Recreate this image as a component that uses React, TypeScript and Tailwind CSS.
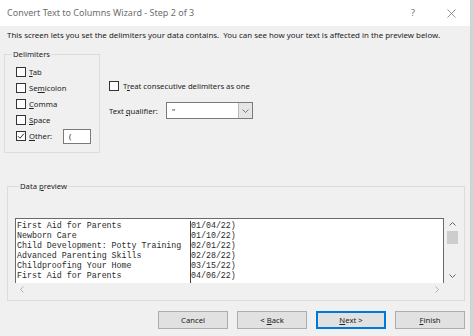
import React from 'react';

const ui = { fontFamily: '"Noto Sans", "Open Sans", sans-serif' };
const mono = { fontFamily: '"Liberation Mono", "Courier New", monospace' };

const Box = ({ checked = false }: { checked?: boolean }) => (
  <span className="w-[10px] h-[10px] border border-[#333333] bg-white flex items-center justify-center shrink-0">
    {checked && (
      <svg width="8" height="8" viewBox="0 0 8 8">
        <path d="M1 4.2 L3 6.2 L7 1.6" fill="none" stroke="#333" strokeWidth="1" />
      </svg>
    )}
  </span>
);

const Check = ({ label, u, checked }: { label: string; u: number; checked?: boolean }) => (
  <div className="h-[16px] flex items-center gap-[3px]">
    <Box checked={checked} />
    <span>
      {label.slice(0, u)}
      <span className="underline">{label[u]}</span>
      {label.slice(u + 1)}
    </span>
  </div>
);

const rows = [
  ['First Aid for Parents', '01/04/22)'],
  ['Newborn Care', '01/10/22)'],
  ['Child Development: Potty Training', '02/01/22)'],
  ['Advanced Parenting Skills', '02/28/22)'],
  ['Childproofing Your Home', '03/15/22)'],
  ['First Aid for Parents', '04/06/22)'],
];

const Btn = ({ children, primary = false }: { children: React.ReactNode; primary?: boolean }) => (
  <div
    className={`w-[70px] h-[18px] flex items-center justify-center bg-[#e1e1e1] ${
      primary ? 'border-2 border-[#0078d7]' : 'border border-[#adadad]'
    }`}
  >
    {children}
  </div>
);

export default function App() {
  return (
    <div className="w-[474px] h-[336px] bg-[#d4d4d4] flex overflow-hidden text-[#222222] text-[7.7px] leading-[10px]" style={ui}>
      <div className="w-[471px] h-[336px] bg-[#f0f0f0] border-r border-[#cfcfcf] flex flex-col">
        {/* title bar */}
        <div className="h-[26px] shrink-0 bg-white flex items-center pl-[7px] text-[9px] text-[#6e6e6e]">
          <span className="flex-1">Convert Text to Columns Wizard - Step 2 of 3</span>
          <span className="w-[10px] text-[9px] mr-[26px]">?</span>
          <svg width="9" height="9" viewBox="0 0 9 9" className="mr-[14px]">
            <path d="M0.5 0.5 L8.5 8.5 M8.5 0.5 L0.5 8.5" stroke="#7a7a7a" strokeWidth="0.8" />
          </svg>
        </div>

        <div className="px-[4px] pt-[4px] flex flex-col">
          <p className="pl-[3px] text-[7.9px]">
            This screen lets you set the delimiters your data contains.&nbsp; You can see how your text is affected in the preview below.
          </p>

          <div className="flex mt-[9px]">
            <fieldset className="w-[96px] h-[104px] border border-[#dcdcdc] pl-[11px]">
              <legend className="ml-[-4px] px-[1px] h-[10px]">Delimiters</legend>
              <div className="pt-[5px] flex flex-col">
                <Check label="Tab" u={0} />
                <Check label="Semicolon" u={2} />
                <Check label="Comma" u={0} />
                <Check label="Space" u={0} />
                <div className="h-[16px] flex items-center gap-[3px]">
                  <Box checked />
                  <span className="w-[31px]">
                    <span className="underline">O</span>ther:
                  </span>
                  <div className="w-[28px] h-[15px] bg-white border border-[#7a7a7a] flex items-center pl-[5px]">(</div>
                </div>
              </div>
            </fieldset>

            <div className="ml-[9px] pt-[31px] flex flex-col">
              <div className="h-[12px] flex items-center gap-[4px]">
                <Box />
                <span>
                  T<span className="underline">r</span>eat consecutive delimiters as one
                </span>
              </div>
              <div className="mt-[10px] h-[17px] flex items-center">
                <span className="w-[57px]">
                  Text <span className="underline">q</span>ualifier:
                </span>
                <div className="w-[87px] h-[17px] bg-white border border-[#7a7a7a] flex">
                  <span className="flex-1 pl-[5px] flex items-center">"</span>
                  <span className="w-[14px] bg-[#e5e5e5] border-l border-[#b9b9b9] flex items-center justify-center">
                    <svg width="7" height="4" viewBox="0 0 7 4">
                      <path d="M0.5 0.5 L3.5 3.5 L6.5 0.5" fill="none" stroke="#606060" strokeWidth="0.8" />
                    </svg>
                  </span>
                </div>
              </div>
            </div>
          </div>

          <fieldset className="ml-[3px] mt-[28px] w-[458px] h-[120px] border border-[#dcdcdc] pl-[7px]">
            <legend className="ml-[4px] px-[1px] h-[10px]">
              Data <span className="underline">p</span>review
            </legend>
            <div className="mt-[27px] flex">
              <div className="w-[429px] h-[65px] bg-white border-t border-l border-r border-[#6a6a6a] flex text-[8.3px] leading-[10px] pt-[2px] text-[#2a2a2a]" style={mono}>
                <div className="w-[175px] border-r border-[#444] pl-[1px]">
                  {rows.map(r => (
                    <div key={r[0] + r[1]} className="whitespace-pre">{r[0]}</div>
                  ))}
                </div>
                <div>
                  {rows.map(r => (
                    <div key={r[1]} className="whitespace-pre">{r[1]}</div>
                  ))}
                </div>
              </div>
              <div className="w-[16px] h-[65px] flex flex-col items-center pt-[4px]">
                <svg width="7" height="4" viewBox="0 0 7 4">
                  <path d="M0.5 3.5 L3.5 0.5 L6.5 3.5" fill="none" stroke="#555" strokeWidth="0.9" />
                </svg>
                <div className="mt-[5px] ml-[1px] w-[11px] h-[13px] bg-[#cdcdcd]" />
                <div className="flex-1" />
                <svg width="7" height="4" viewBox="0 0 7 4" className="mb-[5px]">
                  <path d="M0.5 0.5 L3.5 3.5 L6.5 0.5" fill="none" stroke="#555" strokeWidth="0.9" />
                </svg>
              </div>
            </div>
            <div className="w-[429px] h-[13px] flex items-center justify-between px-[5px]">
              <svg width="4" height="7" viewBox="0 0 4 7">
                <path d="M3.5 0.5 L0.5 3.5 L3.5 6.5" fill="none" stroke="#a0a0a0" strokeWidth="0.8" />
              </svg>
              <svg width="4" height="7" viewBox="0 0 4 7">
                <path d="M0.5 0.5 L3.5 3.5 L0.5 6.5" fill="none" stroke="#a0a0a0" strokeWidth="0.8" />
              </svg>
            </div>
          </fieldset>

          <div className="mt-[10px] flex justify-end gap-[9px] pr-[1px]">
            <Btn>Cancel</Btn>
            <Btn>
              &lt; <span className="underline ml-[2px]">B</span>ack
            </Btn>
            <Btn primary>
              <span className="underline">N</span>ext &gt;
            </Btn>
            <Btn>
              <span className="underline">F</span>inish
            </Btn>
          </div>
        </div>
      </div>
    </div>
  );
}
